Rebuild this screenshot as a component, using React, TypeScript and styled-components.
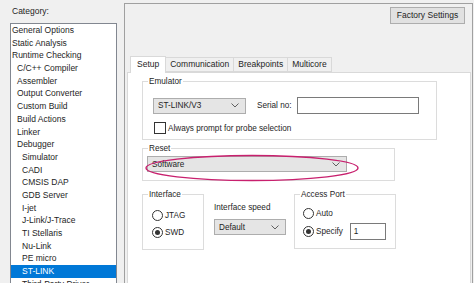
import React from "react"
import styled, { createGlobalStyle } from "styled-components"

const GlobalStyle = createGlobalStyle`
  html, body {
    margin: 0;
    padding: 0;
    background: #f0f0f0;
    overflow: hidden;
  }
  body {
    font-family: "Liberation Sans", Arial, sans-serif;
    font-size: 8.5px;
    color: #1e1e1e;
  }
`

interface Category {
  label: string
  level: number
}

const categories: Category[] = [
  { label: "General Options", level: 0 },
  { label: "Static Analysis", level: 0 },
  { label: "Runtime Checking", level: 0 },
  { label: "C/C++ Compiler", level: 1 },
  { label: "Assembler", level: 1 },
  { label: "Output Converter", level: 1 },
  { label: "Custom Build", level: 1 },
  { label: "Build Actions", level: 1 },
  { label: "Linker", level: 1 },
  { label: "Debugger", level: 1 },
  { label: "Simulator", level: 2 },
  { label: "CADI", level: 2 },
  { label: "CMSIS DAP", level: 2 },
  { label: "GDB Server", level: 2 },
  { label: "I-jet", level: 2 },
  { label: "J-Link/J-Trace", level: 2 },
  { label: "TI Stellaris", level: 2 },
  { label: "Nu-Link", level: 2 },
  { label: "PE micro", level: 2 },
  { label: "ST-LINK", level: 2 },
  { label: "Third-Party Driver", level: 2 },
]

const tabs = ["Setup", "Communication", "Breakpoints", "Multicore"]

// the group label sits this far from the group's left border
const LEGEND_OFFSET = 6

const Chevron = () => (
  <svg width="8" height="5" viewBox="0 0 8 5">
    <path d="M0.5 0.5 L4 4 L7.5 0.5" fill="none" stroke="#606060" strokeWidth="1" />
  </svg>
)

const Dropdown: React.FC<{ value: string; width: number }> = ({ value, width }) => (
  <StyledDropdown $width={width}>
    <span>{value}</span>
    <Chevron />
  </StyledDropdown>
)

const Radio: React.FC<{ label: string; checked?: boolean }> = ({ label, checked }) => (
  <StyledRadioRow>
    <StyledRadioCircle $checked={!!checked} />
    <span>{label}</span>
  </StyledRadioRow>
)

const App: React.FC = () => {
  return (
    <>
      <GlobalStyle />
      <StyledWindow>
        <StyledLeft>
          <StyledCategoryLabel>Category:</StyledCategoryLabel>
          <StyledList>
            {categories.map((c) => (
              <StyledListItem key={c.label} $level={c.level} $selected={c.label === "ST-LINK"}>
                {c.label}
              </StyledListItem>
            ))}
          </StyledList>
        </StyledLeft>

        <StyledPane>
          <StyledHeader>
            <StyledButton>Factory Settings</StyledButton>
          </StyledHeader>

          <StyledTabs>
            {tabs.map((t, i) => (
              <StyledTab key={t} $active={i === 0}>
                {t}
              </StyledTab>
            ))}
          </StyledTabs>

          <StyledPanel>
            <StyledGroup $width={295} $pad={[10, 5, 10]}>
              <legend>Emulator</legend>
              <StyledEmulatorRow>
                <Dropdown value="ST-LINK/V3" width={93} />
                <StyledSerialLabel>Serial no:</StyledSerialLabel>
                <StyledTextInput $width={122} />
              </StyledEmulatorRow>
              <StyledCheckRow>
                <StyledCheckbox />
                <span>Always prompt for probe selection</span>
              </StyledCheckRow>
            </StyledGroup>

            <StyledResetGroup $width={253} $pad={[2, 8, 4]}>
              <legend>Reset</legend>
              <Dropdown value="Software" width={200} />
              <StyledHighlight width="216" height="30" viewBox="0 0 216 30">
                <ellipse cx="108" cy="15" rx="106" ry="12.5" fill="none" stroke="#c8206e" strokeWidth="1.4" />
              </StyledHighlight>
            </StyledResetGroup>

            <StyledBottomRow>
              <StyledRadioGroup $width={62} $pad={[9, 10, 9]} $gap={5.5}>
                <legend>Interface</legend>
                <Radio label="JTAG" />
                <Radio label="SWD" checked />
              </StyledRadioGroup>

              <StyledSpeedColumn>
                <span>Interface speed</span>
                <Dropdown value="Default" width={72} />
              </StyledSpeedColumn>

              <StyledRadioGroup $width={102} $pad={[7.5, 8, 8]} $gap={3.5}>
                <legend>Access Port</legend>
                <Radio label="Auto" />
                <StyledSpecifyRow>
                  <Radio label="Specify" checked />
                  <StyledTextInput $width={36}>1</StyledTextInput>
                </StyledSpecifyRow>
              </StyledRadioGroup>
            </StyledBottomRow>
          </StyledPanel>
        </StyledPane>
      </StyledWindow>
    </>
  )
}

const StyledWindow = styled.div`
  display: flex;
  height: 283px;
`

const StyledLeft = styled.div`
  width: 107px;
  padding: 5px 0 0 10px;
  display: flex;
  flex-direction: column;
`

const StyledCategoryLabel = styled.div`
  line-height: 12px;
  padding-left: 2px;
  margin-bottom: 6px;
`

const StyledList = styled.div`
  flex: 1;
  background: #fff;
  border: 1px solid #828790;
  border-bottom: none;
  overflow: hidden;
`

const StyledListItem = styled.div<{ $level: number; $selected: boolean }>`
  height: 12.7px;
  line-height: 12.7px;
  padding-left: ${(p) => 1 + p.$level * 5}px;
  white-space: nowrap;
  background: ${(p) => (p.$selected ? "#0078d7" : "transparent")};
  color: ${(p) => (p.$selected ? "#fff" : "inherit")};
`

const StyledPane = styled.div`
  flex: 1;
  margin: 3px 1px 0 7px;
  border: 1px solid #a0a0a0;
  border-bottom: none;
  padding: 0 1px 0 2px;
  display: flex;
  flex-direction: column;
`

const StyledHeader = styled.div`
  display: flex;
  justify-content: flex-end;
  padding: 3px 6px 0 0;
`

const StyledButton = styled.div`
  width: 73px;
  height: 15px;
  line-height: 15px;
  text-align: center;
  background: #e1e1e1;
  border: 1px solid #adadad;
`

const StyledTabs = styled.div`
  display: flex;
  align-items: flex-end;
  margin-top: 32px;
  padding-left: 3px;
`

const StyledTab = styled.div<{ $active: boolean }>`
  position: relative;
  height: ${(p) => (p.$active ? 16 : 13)}px;
  line-height: ${(p) => (p.$active ? 15 : 13)}px;
  padding: 0 ${(p) => (p.$active ? 6 : 4)}px;
  margin-bottom: ${(p) => (p.$active ? -1 : 0)}px;
  background: ${(p) => (p.$active ? "#fff" : "#f0f0f0")};
  border: 1px solid #d9d9d9;
  border-bottom: ${(p) => (p.$active ? "none" : "1px solid #d9d9d9")};
  border-left-width: ${(p) => (p.$active ? 1 : 0)}px;
  z-index: ${(p) => (p.$active ? 1 : 0)};
  white-space: nowrap;
`

const StyledPanel = styled.div`
  flex: 1;
  background: #fff;
  border: 1px solid #d9d9d9;
  border-bottom: none;
  padding: 3px 0 0 14px;
  font-size: 8.2px;
`

// $pad: [top, bottom, left] inside the group border
const StyledGroup = styled.fieldset<{ $width: number; $pad: [number, number, number] }>`
  position: relative;
  box-sizing: border-box;
  width: ${(p) => p.$width}px;
  margin: 0;
  min-width: 0;
  border: 1px solid #dcdcdc;
  padding: ${(p) => `${p.$pad[0]}px 0 ${p.$pad[1]}px ${p.$pad[2]}px`};

  & > legend {
    padding: 0 1px;
    margin-left: ${(p) => LEGEND_OFFSET - p.$pad[2] - 1}px;
    line-height: 11px;
  }
`

const StyledEmulatorRow = styled.div`
  display: flex;
  align-items: center;
`

const StyledSerialLabel = styled.span`
  margin: 0 5px 0 11px;
`

const StyledTextInput = styled.div<{ $width: number }>`
  box-sizing: border-box;
  width: ${(p) => p.$width}px;
  height: 17px;
  line-height: 15px;
  padding-left: 3px;
  background: #fff;
  border: 1px solid #7a7a7a;
`

const StyledCheckRow = styled.div`
  display: flex;
  align-items: center;
  gap: 2px;
  margin-top: 8px;
  padding-left: 1px;
`

const StyledCheckbox = styled.span`
  box-sizing: border-box;
  width: 12px;
  height: 12px;
  background: #fff;
  border: 1px solid #333;
`

const StyledDropdown = styled.div<{ $width: number }>`
  box-sizing: border-box;
  width: ${(p) => p.$width}px;
  height: 16px;
  display: flex;
  align-items: center;
  justify-content: space-between;
  padding: 0 6px 0 4px;
  background: #e5e5e5;
  border: 1px solid #adadad;
`

const StyledResetGroup = styled(StyledGroup)`
  margin-top: 3px;
`

const StyledHighlight = styled.svg`
  position: absolute;
  left: 1px;
  top: -1px;
  pointer-events: none;
`

const StyledBottomRow = styled.div`
  display: flex;
  align-items: flex-start;
  margin-top: 8px;
`

const StyledRadioGroup = styled(StyledGroup)<{ $gap: number }>`
  display: flex;
  flex-direction: column;
  gap: ${(p) => p.$gap}px;
`

const StyledRadioRow = styled.div`
  display: flex;
  align-items: center;
  gap: 2px;
  height: 12px;
`

const StyledRadioCircle = styled.span<{ $checked: boolean }>`
  box-sizing: border-box;
  width: 11px;
  height: 11px;
  border-radius: 50%;
  border: 1px solid #333;
  background: #fff;
  display: flex;
  align-items: center;
  justify-content: center;

  &::after {
    content: "";
    display: ${(p) => (p.$checked ? "block" : "none")};
    width: 5px;
    height: 5px;
    border-radius: 50%;
    background: #333;
  }
`

const StyledSpeedColumn = styled.div`
  display: flex;
  flex-direction: column;
  gap: 7px;
  padding-top: 14px;
  margin: 0 8px 0 10px;
`

const StyledSpecifyRow = styled.div`
  display: flex;
  align-items: center;
  gap: 7px;
`

export default App
